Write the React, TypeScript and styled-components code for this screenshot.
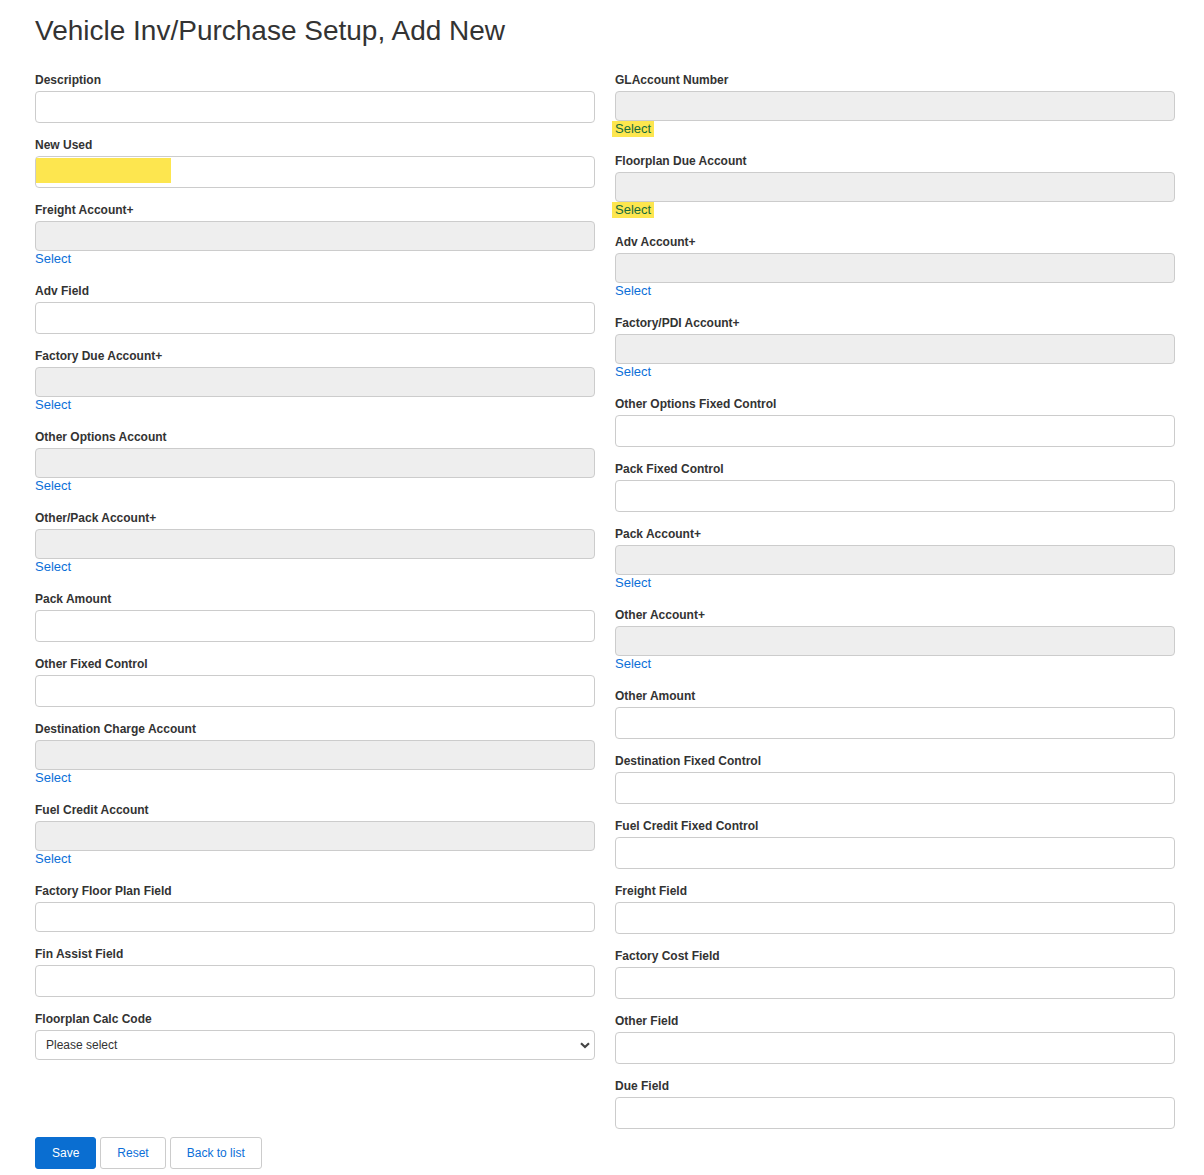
import React from 'react';
import styled, { createGlobalStyle } from 'styled-components';

const GlobalStyle = createGlobalStyle`
    html, body {
        margin: 0;
        padding: 0;
        background: #fff;
    }
    body {
        font-family: "Liberation Sans", Arial, sans-serif;
        color: #333;
    }
`;

type Field = {
    label: string;
    kind: 'text' | 'lookup';
    height?: number;
    highlight?: boolean;
};

const leftFields: Field[] = [
    { label: 'Description', kind: 'text' },
    { label: 'New Used', kind: 'text', highlight: true },
    { label: 'Freight Account+', kind: 'lookup' },
    { label: 'Adv Field', kind: 'text' },
    { label: 'Factory Due Account+', kind: 'lookup' },
    { label: 'Other Options Account', kind: 'lookup' },
    { label: 'Other/Pack Account+', kind: 'lookup' },
    { label: 'Pack Amount', kind: 'text' },
    { label: 'Other Fixed Control', kind: 'text' },
    { label: 'Destination Charge Account', kind: 'lookup' },
    { label: 'Fuel Credit Account', kind: 'lookup' },
    { label: 'Factory Floor Plan Field', kind: 'text', height: 30 },
    { label: 'Fin Assist Field', kind: 'text' },
];

const rightFields: Field[] = [
    { label: 'GLAccount Number', kind: 'lookup', highlight: true },
    { label: 'Floorplan Due Account', kind: 'lookup', highlight: true },
    { label: 'Adv Account+', kind: 'lookup' },
    { label: 'Factory/PDI Account+', kind: 'lookup' },
    { label: 'Other Options Fixed Control', kind: 'text' },
    { label: 'Pack Fixed Control', kind: 'text' },
    { label: 'Pack Account+', kind: 'lookup' },
    { label: 'Other Account+', kind: 'lookup' },
    { label: 'Other Amount', kind: 'text' },
    { label: 'Destination Fixed Control', kind: 'text' },
    { label: 'Fuel Credit Fixed Control', kind: 'text' },
    { label: 'Freight Field', kind: 'text' },
    { label: 'Factory Cost Field', kind: 'text' },
    { label: 'Other Field', kind: 'text' },
    { label: 'Due Field', kind: 'text' },
];

const FormField = ({ field }: { field: Field }) => {
    if (field.kind === 'lookup') {
        return (
            <Group>
                <Label>{field.label}</Label>
                <TextBox $readOnly $height={30} readOnly />
                <SelectLink href="#" $marked={field.highlight}>
                    Select
                </SelectLink>
            </Group>
        );
    }
    return (
        <Group>
            <Label>{field.label}</Label>
            <InputWrap>
                <TextBox $height={field.height ?? 32} />
                {field.highlight && <Marker />}
            </InputWrap>
        </Group>
    );
};

const App = () => {
    return (
        <>
            <GlobalStyle />
            <Page>
                <Title>Vehicle Inv/Purchase Setup, Add New</Title>

                <Columns>
                    <Column>
                        {leftFields.map((f) => (
                            <FormField key={f.label} field={f} />
                        ))}

                        {/* dropdown */}
                        <Group>
                            <Label>Floorplan Calc Code</Label>
                            <InputWrap>
                                <Dropdown defaultValue="">
                                    <option value="">Please select</option>
                                </Dropdown>
                                <Chevron width="10" height="7" viewBox="0 0 10 7">
                                    <path d="M1 1.2 L5 5 L9 1.2" fill="none" stroke="#444" strokeWidth="2.2" />
                                </Chevron>
                            </InputWrap>
                        </Group>
                    </Column>

                    <Column>
                        {rightFields.map((f) => (
                            <FormField key={f.label} field={f} />
                        ))}
                    </Column>
                </Columns>

                <Actions>
                    <Button $primary>Save</Button>
                    <Button>Reset</Button>
                    <Button>Back to list</Button>
                </Actions>
            </Page>
        </>
    );
};

const Page = styled.div`
    width: 1140px;
    padding: 14px 0 6px 35px;
`;

const Title = styled.h1`
    margin: 0 0 24px 0;
    font-size: 28px;
    line-height: 34px;
    font-weight: 400;
    color: #333;
`;

const Columns = styled.div`
    display: grid;
    grid-template-columns: 560px 560px;
    column-gap: 20px;
    align-items: start;
`;

const Column = styled.div`
    display: flex;
    flex-direction: column;
    gap: 14px;
`;

const Group = styled.div`
    display: flex;
    flex-direction: column;
`;

const Label = styled.label`
    display: block;
    font-size: 12px;
    font-weight: 700;
    line-height: 17px;
    margin-bottom: 2px;
    color: #333;
`;

const InputWrap = styled.div`
    position: relative;
`;

const TextBox = styled.input<{ $readOnly?: boolean; $height: number }>`
    display: block;
    box-sizing: border-box;
    width: 100%;
    height: ${(p) => p.$height}px;
    margin: 0;
    padding: 0 10px;
    border: 1px solid #ccc;
    border-radius: 4px;
    background: ${(p) => (p.$readOnly ? '#eee' : '#fff')};
    font-family: "Liberation Sans", Arial, sans-serif;
    font-size: 12px;
    outline: none;
`;

const Marker = styled.span`
    position: absolute;
    left: 1px;
    top: 2px;
    width: 135px;
    height: 25px;
    background: #fde64f;
`;

const SelectLink = styled.a<{ $marked?: boolean }>`
    align-self: flex-start;
    display: block;
    font-size: 13px;
    line-height: 16px;
    margin-bottom: 2px;
    text-decoration: none;
    color: ${(p) => (p.$marked ? '#166b3c' : '#0c6fd8')};
    background: ${(p) => (p.$marked ? '#fde64f' : 'transparent')};
    padding: 0 3px;
    margin-left: -3px;
`;

const Dropdown = styled.select`
    display: block;
    box-sizing: border-box;
    width: 100%;
    height: 30px;
    margin: 0;
    padding: 0 10px;
    border: 1px solid #ccc;
    border-radius: 4px;
    background: #fff;
    appearance: none;
    font-family: "Liberation Sans", Arial, sans-serif;
    font-size: 12px;
    color: #333;
    outline: none;
`;

const Chevron = styled.svg`
    position: absolute;
    right: 5px;
    top: 12px;
    pointer-events: none;
`;

const Actions = styled.div`
    display: flex;
    gap: 4px;
    margin-top: 8px;
`;

const Button = styled.button<{ $primary?: boolean }>`
    height: 32px;
    padding: 0 16px;
    border-radius: 3px;
    border: 1px solid ${(p) => (p.$primary ? '#0a6ed1' : '#ccc')};
    background: ${(p) => (p.$primary ? '#0a6ed1' : '#fff')};
    color: ${(p) => (p.$primary ? '#fff' : '#0c6fd8')};
    font-family: "Liberation Sans", Arial, sans-serif;
    font-size: 12px;
    cursor: pointer;
`;

export default App;
